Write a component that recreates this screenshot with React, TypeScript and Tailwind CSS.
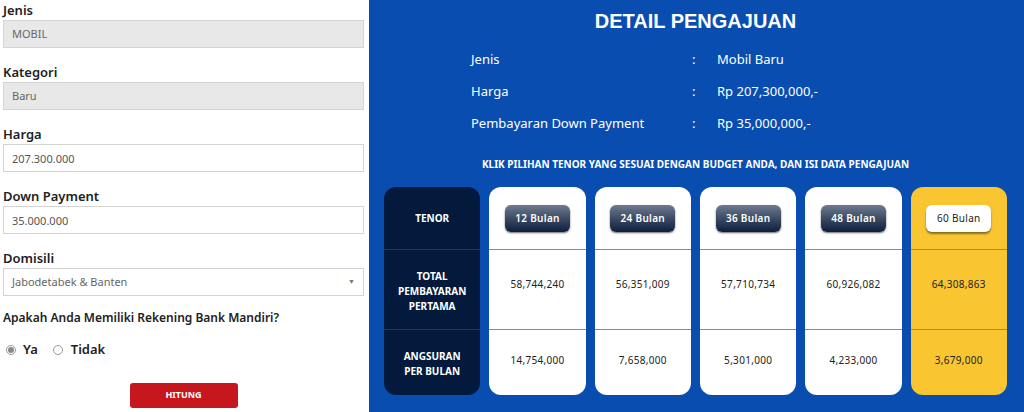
import { useState } from "react";

const tenors = [
    { bulan: 12, total: "58,744,240", angsuran: "14,754,000" },
    { bulan: 24, total: "56,351,009", angsuran: "7,658,000" },
    { bulan: 36, total: "57,710,734", angsuran: "5,301,000" },
    { bulan: 48, total: "60,926,082", angsuran: "4,233,000" },
    { bulan: 60, total: "64,308,863", angsuran: "3,679,000" },
];

const details = [
    { label: "Jenis", value: "Mobil Baru" },
    { label: "Harga", value: "Rp 207,300,000,-" },
    { label: "Pembayaran Down Payment", value: "Rp 35,000,000,-" },
];

function Field({ label, children }: { label: string; children: React.ReactNode }) {
    return (
        <div className="mb-[14px]">
            <div className="h-5 text-[13px] font-semibold leading-5 text-[#222]">{label}</div>
            {children}
        </div>
    );
}

export default function App() {
    const [selected, setSelected] = useState(60);
    const [rekening, setRekening] = useState("ya");

    return (
        <div className="flex h-[412px] w-[1024px] overflow-hidden bg-white font-['Noto_Sans',sans-serif]">
            {/* Form kiri */}
            <div className="w-[369px] shrink-0 pl-[3px] pr-[5px]">
                <Field label="Jenis">
                    <div className="flex h-7 items-center border border-[#d4d4d4] bg-[#e8e8e8] px-2 text-[11px] text-[#666]">
                        MOBIL
                    </div>
                </Field>
                <Field label="Kategori">
                    <div className="flex h-7 items-center border border-[#d4d4d4] bg-[#e8e8e8] px-2 text-[11px] text-[#666]">
                        Baru
                    </div>
                </Field>
                <Field label="Harga">
                    <input
                        className="h-7 w-full border border-[#d4d4d4] px-2 text-[11px] text-[#555] outline-none"
                        defaultValue="207.300.000"
                    />
                </Field>
                <Field label="Down Payment">
                    <input
                        className="h-7 w-full border border-[#d4d4d4] px-2 text-[11px] text-[#555] outline-none"
                        defaultValue="35.000.000"
                    />
                </Field>
                <Field label="Domisili">
                    <div className="flex h-7 items-center justify-between border border-[#d4d4d4] px-2 text-[11px] text-[#666]">
                        <span>Jabodetabek &amp; Banten</span>
                        <span className="text-[7px] text-[#777]">▼</span>
                    </div>
                </Field>
                <div className="-mt-[2px] text-[12px] font-semibold leading-5 text-[#222]">
                    Apakah Anda Memiliki Rekening Bank Mandiri?
                </div>
                <div className="mt-[12px] flex items-center text-[13px] font-semibold text-[#222]">
                    <label className="flex items-center gap-[7px] pl-[3px]" onClick={() => setRekening("ya")}>
                        <span className="flex h-[10px] w-[10px] items-center justify-center rounded-full border border-[#999] bg-white">
                            {rekening === "ya" && <span className="h-[6px] w-[6px] rounded-full bg-[#888]" />}
                        </span>
                        Ya
                    </label>
                    <label className="ml-[15px] flex items-center gap-[8px]" onClick={() => setRekening("tidak")}>
                        <span className="flex h-[10px] w-[10px] items-center justify-center rounded-full border border-[#999] bg-white">
                            {rekening === "tidak" && <span className="h-[6px] w-[6px] rounded-full bg-[#888]" />}
                        </span>
                        Tidak
                    </label>
                </div>
                <div className="mt-[23px] flex justify-center">
                    <button className="h-[25px] w-[108px] rounded-[3px] bg-[#c6161e] text-[9px] font-bold text-white">
                        HITUNG
                    </button>
                </div>
            </div>

            {/* Detail kanan */}
            <div className="flex-1 bg-[#0a4db1] pl-[15px] pr-[17px] text-white">
                <h1 className="pt-[9px] text-center font-['Liberation_Sans',sans-serif] text-[20px] font-bold leading-6">
                    DETAIL PENGAJUAN
                </h1>
                <div className="mt-[11px] pl-[87px]">
                    {details.map((d) => (
                        <div key={d.label} className="flex h-8 items-center text-[13px]">
                            <span className="w-[221px]">{d.label}</span>
                            <span className="w-[25px]">:</span>
                            <span>{d.value}</span>
                        </div>
                    ))}
                </div>
                <p className="mt-[16px] text-center text-[10px] font-bold leading-4">
                    KLIK PILIHAN TENOR YANG SESUAI DENGAN BUDGET ANDA, DAN ISI DATA PENGAJUAN
                </p>

                <div className="mt-[15px] grid grid-cols-6 gap-[9px]">
                    <div className="flex h-[208px] flex-col rounded-[12px] bg-[#031a3c] text-center text-[10px] font-bold leading-[15px]">
                        <div className="flex h-[63px] items-center justify-center border-b border-[#2a3550]">TENOR</div>
                        <div className="flex h-[80px] items-center justify-center border-b border-[#2a3550] pt-[4px]">
                            TOTAL<br />PEMBAYARAN<br />PERTAMA
                        </div>
                        <div className="flex flex-1 items-center justify-center pt-[2px]">
                            ANGSURAN<br />PER BULAN
                        </div>
                    </div>
                    {tenors.map((t) => {
                        const active = t.bulan === selected;
                        return (
                            <div
                                key={t.bulan}
                                onClick={() => setSelected(t.bulan)}
                                className={`flex h-[208px] cursor-pointer flex-col rounded-[12px] text-center text-[10px] tracking-[0.3px] text-[#222] ${
                                    active ? "bg-[#f9c631]" : "bg-white"
                                }`}
                            >
                                <div className="flex h-[63px] items-center justify-center border-b border-[#8a8a8a]">
                                    {active ? (
                                        <span className="flex h-[27px] w-[65px] items-center justify-center rounded-[6px] bg-white text-[10px] text-[#222] shadow-[0_2px_2px_rgba(0,0,0,0.45)]">
                                            {t.bulan} Bulan
                                        </span>
                                    ) : (
                                        <span className="flex h-[27px] w-[65px] items-center justify-center rounded-[6px] bg-gradient-to-b from-[#6f7b8e] to-[#0e1f3e] text-[10px] font-semibold text-white shadow-[0_1px_2px_rgba(0,0,0,0.6)]">
                                            {t.bulan} Bulan
                                        </span>
                                    )}
                                </div>
                                <div className="flex h-[80px] items-center justify-center border-b border-[#8a8a8a] pb-[10px]">
                                    {t.total}
                                </div>
                                <div className="flex flex-1 items-center justify-center pb-[4px]">{t.angsuran}</div>
                            </div>
                        );
                    })}
                </div>
            </div>
        </div>
    );
}
